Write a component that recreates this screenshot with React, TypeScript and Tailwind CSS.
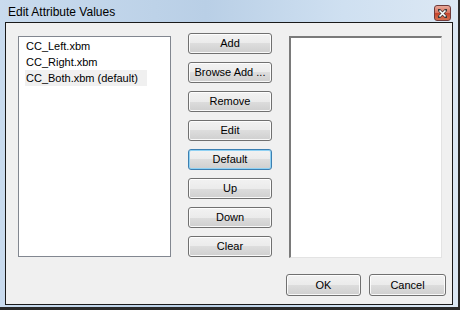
import React from "react";

const base =
  "flex items-center justify-center rounded-[3px] border bg-[linear-gradient(to_bottom,#f2f2f2_0%,#ebebeb_50%,#dddddd_50%,#cfcfcf_100%)] text-[11px] text-black";
const normal = base + " border-[#707070] shadow-[inset_0_0_0_1px_rgba(255,255,255,0.85)]";
const deflt = base + " border-[#3c7fb1] shadow-[inset_0_0_0_1px_#8fd1f3]";

export default function App() {
  const buttons = ["Add", "Browse Add ...", "Remove", "Edit", "Default", "Up", "Down", "Clear"];
  return (
    <div
      className="w-[460px] h-[310px] bg-[#2a2a2a] overflow-hidden"
      style={{ fontFamily: '"Liberation Sans", Arial, sans-serif' }}
    >
      <div className="w-[458px] h-[307px] flex flex-col bg-[linear-gradient(to_right,#c9dbee_0%,#b9cfe6_45%,#cfe0f1_75%,#dce8f4_100%)] px-[5px] pb-[2px]">
        <div className="h-[22px] flex items-start justify-between pl-[3px] pr-[2px]">
          <span className="text-[12px] text-black mt-[5px] leading-[15px]">Edit Attribute Values</span>
          <div className="w-[17px] h-[16px] mt-[5px] rounded-[3px] border border-[#6f3a3a] bg-[linear-gradient(to_bottom,#e9a99a_0%,#d7705c_50%,#c5432b_51%,#d6704f_100%)] flex items-center justify-center">
            <svg width="9" height="9" viewBox="0 0 9 9">
              <path d="M1 1 L8 8 M8 1 L1 8" stroke="#3a3a3a" strokeWidth="3" strokeLinecap="square" />
              <path d="M1.5 1.5 L7.5 7.5 M7.5 1.5 L1.5 7.5" stroke="#ffffff" strokeWidth="1.6" />
            </svg>
          </div>
        </div>
        <div className="flex-1 border border-[#1a1a1a] bg-[#f0f0f0] flex flex-col">
          <div className="flex items-start pl-[12px] pt-[10px] gap-[17px]">
            <div className="mt-[3px] w-[153px] h-[221px] border border-[#828790] bg-white pt-[1px] pl-[6px] text-[11px] text-black">
              <div className="h-[16px] leading-[16px] pl-[1px]">CC_Left.xbm</div>
              <div className="h-[16px] leading-[16px] pl-[1px]">CC_Right.xbm</div>
              <div className="h-[16px] leading-[16px] pl-[1px] w-[122px] bg-[#f0f0f0]">CC_Both.xbm (default)</div>
            </div>
            <div className="flex flex-col gap-[8px]">
              {buttons.map((b) => (
                <div key={b} className={(b === "Default" ? deflt : normal) + " h-[21px] w-[84px]"}>
                  {b}
                </div>
              ))}
            </div>
            <div className="mt-[3px] w-[153px] h-[222px] border-t-2 border-l-2 border-r border-b border-t-[#7a7a7a] border-l-[#7a7a7a] border-r-[#e3e3e3] border-b-[#e3e3e3] bg-white" />
          </div>
          <div className="flex justify-end gap-[8px] pr-[6px] mt-[16px]">
            <div className={normal + " w-[75px] h-[22px]"}>OK</div>
            <div className={normal + " w-[77px] h-[22px]"}>Cancel</div>
          </div>
        </div>
      </div>
    </div>
  );
}
